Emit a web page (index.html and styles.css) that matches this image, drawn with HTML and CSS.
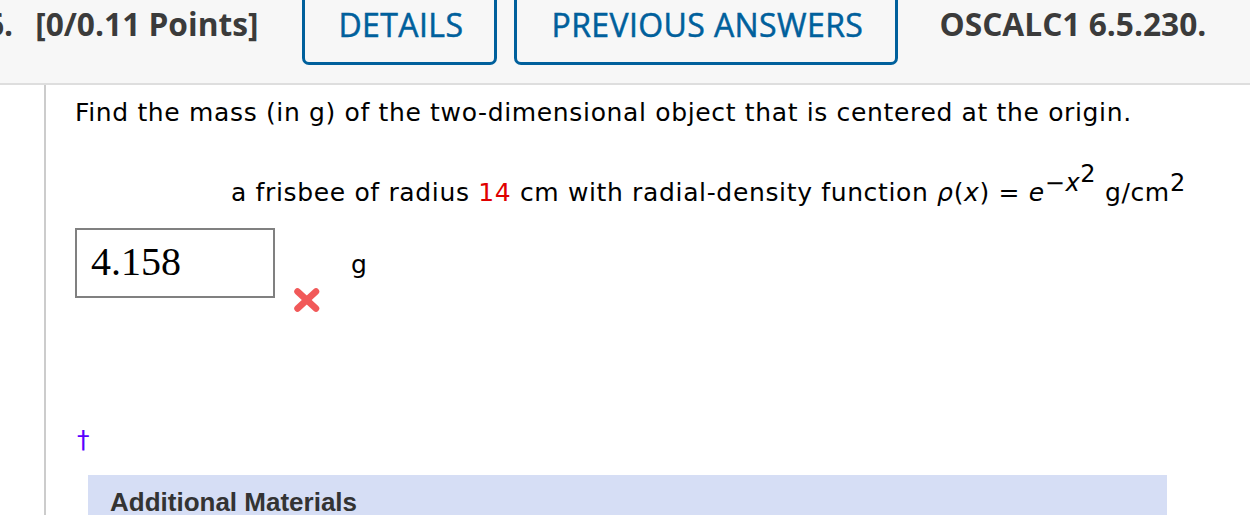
FILE: index.html
```html
<!DOCTYPE html>
<html>
<head>
<meta charset="utf-8">
<link rel="stylesheet" href="styles.css">
</head>
<body>
<header class="qhead">
  <span class="qnum"><span class="qidx">6.</span><span class="qpts">[0/0.11 Points]</span></span>
  <span class="tab tab-details">DETAILS</span>
  <span class="tab tab-prev">PREVIOUS ANSWERS</span>
  <span class="qref">OSCALC1 6.5.230.</span>
</header>
<main class="qbody">
  <p class="prompt">Find the mass (in g) of the two-dimensional object that is centered at the origin.</p>
  <p class="given">a frisbee of radius <span class="red">14</span> cm with radial-density function <i class="math">ρ</i>(<i class="math">x</i>) = <i class="math">e</i><sup class="sup">−<i class="math">x</i><sup class="sup2">2</sup></sup> g/cm<sup class="sup">2</sup></p>
  <div class="answer-row">
    <div class="answer-box">4.158</div>
    <svg class="wrong" width="30" height="26" viewBox="0 0 30 26">
      <g stroke="#f04848" stroke-width="6.5" stroke-linecap="round" opacity="0.9">
        <line x1="5.5" y1="4.5" x2="24" y2="21.5"/>
        <line x1="24" y1="4.5" x2="5.5" y2="21.5"/>
      </g>
    </svg>
    <span class="unit">g</span>
  </div>
  <div class="dagger">†</div>
  <section class="materials">
    <h3 class="materials-title">Additional Materials</h3>
  </section>
</main>
</body>
</html>
```
FILE: styles.css
```css
html, body {
  margin: 0;
  padding: 0;
  background: #ffffff;
  overflow: hidden;
}
.qhead {
  height: 83px;
  background: #f7f7f7;
  border-bottom: 2px solid #dedede;
  display: flex;
  align-items: flex-start;
  font-family: "Open Sans", "DejaVu Sans", sans-serif;
  color: #3b3b3b;
  overflow: hidden;
}
.qnum {
  font-weight: 700;
  font-size: 31.7px;
  margin-left: -14px;
  margin-top: 4px;
  line-height: 40px;
  white-space: nowrap;
  display: flex;
}
.qpts {
  margin-left: 22px;
}
.tab {
  margin-top: -10px;
  height: 75px;
  box-sizing: border-box;
  border: 3px solid #00609c;
  border-radius: 0 0 7px 7px;
  color: #00609c;
  font-size: 32px;
  letter-spacing: 0.4px;
  -webkit-text-stroke: 0.5px #00609c;
  display: flex;
  align-items: flex-start;
  padding-top: 12px;
  line-height: 40px;
  white-space: nowrap;
}
.tab-details {
  margin-left: 43px;
  width: 195px;
  padding-left: 34px;
}
.tab-prev {
  margin-left: 17px;
  width: 384px;
  padding-left: 35px;
}
.qref {
  font-weight: 700;
  font-size: 31.7px;
  margin-left: 42px;
  margin-top: 4px;
  line-height: 40px;
  white-space: nowrap;
}
.qbody {
  margin-left: 44px;
  border-left: 2px solid #cccccc;
  padding-left: 29px;
  padding-top: 13px;
  height: 500px;
  font-family: "DejaVu Sans", Verdana, sans-serif;
  font-size: 25px;
  letter-spacing: 0.65px;
  color: #000;
}
.prompt {
  margin: 0;
  line-height: 30px;
}
.given {
  margin: 46px 0 0 156px;
  line-height: 30px;
}
.red { color: #e00000; }
.math { font-style: italic; }
.sup {
  font-size: 24px;
  line-height: 0;
  vertical-align: 10px;
}
.sup2 {
  font-size: 24px;
  line-height: 0;
  vertical-align: 9px;
}
.answer-row {
  margin-top: 20px;
  display: flex;
  align-items: flex-start;
}
.answer-box {
  width: 182px;
  height: 66px;
  border: 2px solid #808080;
  font-family: "Liberation Serif", "DejaVu Serif", serif;
  font-size: 40px;
  letter-spacing: 0;
  line-height: 64px;
  padding-left: 14px;
  box-sizing: content-box;
}
.wrong {
  margin-left: 17px;
  margin-top: 59px;
}
.unit {
  margin-left: 29px;
  margin-top: 22px;
  line-height: 30px;
}
.dagger {
  margin-top: 115px;
  margin-left: 2px;
  color: #5a00ff;
  font-size: 25px;
  line-height: 24px;
}
.materials {
  margin-top: 23px;
  margin-left: 13px;
  width: 1079px;
  height: 80px;
  background: #d6def5;
  padding: 12px 22px;
  box-sizing: border-box;
}
.materials-title {
  margin: 0;
  font-family: "Liberation Sans", Arial, sans-serif;
  font-weight: 700;
  font-size: 26px;
  letter-spacing: 0;
  color: #333333;
  line-height: 30px;
}
```
